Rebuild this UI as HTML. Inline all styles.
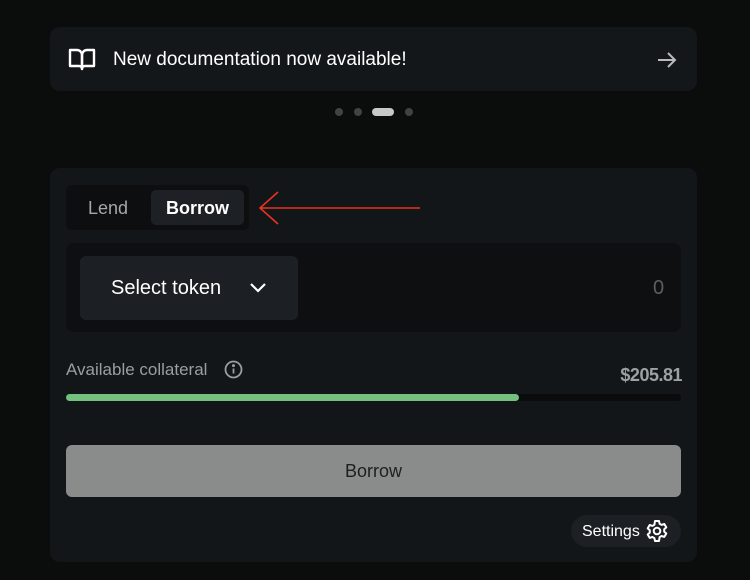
<!DOCTYPE html>
<html><head><style>
*{margin:0;padding:0;box-sizing:border-box}
body{width:750px;height:580px;background:#0b0c0c;font-family:"Liberation Sans",sans-serif;position:relative;overflow:hidden;color:#fff}
.abs{position:absolute}
</style></head><body>
<div class="abs" style="left:50px;top:27px;width:647px;height:64px;background:#141719;border-radius:10px"></div>
<svg class="abs" style="left:68px;top:47px" width="28" height="25" viewBox="0 0 28 25" fill="none" stroke="#fff" stroke-width="2.4" stroke-linejoin="round"><path d="M2 3h7a5 5 0 0 1 5 5v14a3 3 0 0 0-3-3H2z"/><path d="M26 3h-7a5 5 0 0 0-5 5v14a3 3 0 0 1 3-3h9z"/></svg>
<div class="abs" style="left:113px;top:49px;font-size:19px;color:#fff">New documentation now available!</div>
<svg class="abs" style="left:656px;top:50px" width="22" height="20" viewBox="0 0 22 20" fill="none" stroke="#bbb" stroke-width="2"><path d="M2 10h17M12 3l7 7-7 7"/></svg>
<div class="abs" style="left:335px;top:108px;width:8px;height:8px;border-radius:4px;background:#3f4443"></div>
<div class="abs" style="left:354px;top:108px;width:8px;height:8px;border-radius:4px;background:#3f4443"></div>
<div class="abs" style="left:372px;top:108px;width:22px;height:8px;border-radius:4px;background:#c8c8c8"></div>
<div class="abs" style="left:405px;top:108px;width:8px;height:8px;border-radius:4px;background:#3f4443"></div>

<div class="abs" style="left:50px;top:168px;width:647px;height:394px;background:#131619;border-radius:10px"></div>
<div class="abs" style="left:66px;top:185px;width:183px;height:45px;background:#0c0e0f;border-radius:6px"></div>
<div class="abs" style="left:88px;top:198px;font-size:18px;color:#a5a8aa">Lend</div>
<div class="abs" style="left:151px;top:190px;width:93px;height:35px;background:#1d2125;border-radius:5px;text-align:center;line-height:36px;font-size:18px;font-weight:bold">Borrow</div>
<svg class="abs" style="left:255px;top:190px" width="170" height="36"><path d="M165 18H5M23 2L5 18l18 16" fill="none" stroke="#e8341c" stroke-width="1.6"/></svg>

<div class="abs" style="left:66px;top:243px;width:615px;height:89px;background:#0d0f10;border-radius:8px"></div>
<div class="abs" style="left:80px;top:256px;width:218px;height:64px;background:#1c2024;border-radius:6px"></div>
<div class="abs" style="left:111px;top:277px;font-size:20px">Select token</div>
<svg class="abs" style="left:249px;top:282px" width="18" height="12"><path d="M2 2l7 7 7-7" fill="none" stroke="#fff" stroke-width="2.2"/></svg>
<div class="abs" style="left:653px;top:277px;font-size:20px;color:#5b5f62">0</div>

<div class="abs" style="left:66px;top:360px;font-size:17px;color:#9a9ea2">Available collateral</div>
<svg class="abs" style="left:224px;top:360px" width="19" height="19" fill="none" stroke="#9a9ea2" stroke-width="1.8"><circle cx="9.5" cy="9.5" r="8"/><path d="M9.5 8.5v5"/><circle cx="9.5" cy="5.6" r=".6" fill="#9a9ea2"/></svg>
<div class="abs" style="left:560px;top:365px;width:122px;text-align:right;font-size:18px;font-weight:bold;color:#9ea1a3;letter-spacing:-0.5px">$205.81</div>
<div class="abs" style="left:66px;top:394px;width:615px;height:7px;background:#0a0b0c;border-radius:4px"></div>
<div class="abs" style="left:66px;top:394px;width:453px;height:7px;background:#74c07f;border-radius:4px"></div>

<div class="abs" style="left:66px;top:445px;width:615px;height:52px;background:#8a8b8b;border-radius:6px;text-align:center;line-height:53px;font-size:18px;color:#1e1f20"><span>Borrow</span></div>

<div class="abs" style="left:571px;top:515px;width:110px;height:32px;background:#1c2024;border-radius:16px"></div>
<div class="abs" style="left:582px;top:523px;font-size:16px">Settings</div>
<svg class="abs" style="left:645px;top:519px" width="24" height="24" viewBox="0 0 24 24" fill="none" stroke="#fff" stroke-width="2"><path d="M10 2h4l.6 2.8 2 1.1 2.7-.9 2 3.4-2.1 1.9v2.3l2.1 1.9-2 3.4-2.7-.9-2 1.1L14 22h-4l-.6-2.9-2-1.1-2.7.9-2-3.4 2.1-1.9v-2.3L2.7 9.4l2-3.4 2.7.9 2-1.1z" stroke-linejoin="round"/><circle cx="12" cy="12" r="3.3"/></svg>
</body></html>
